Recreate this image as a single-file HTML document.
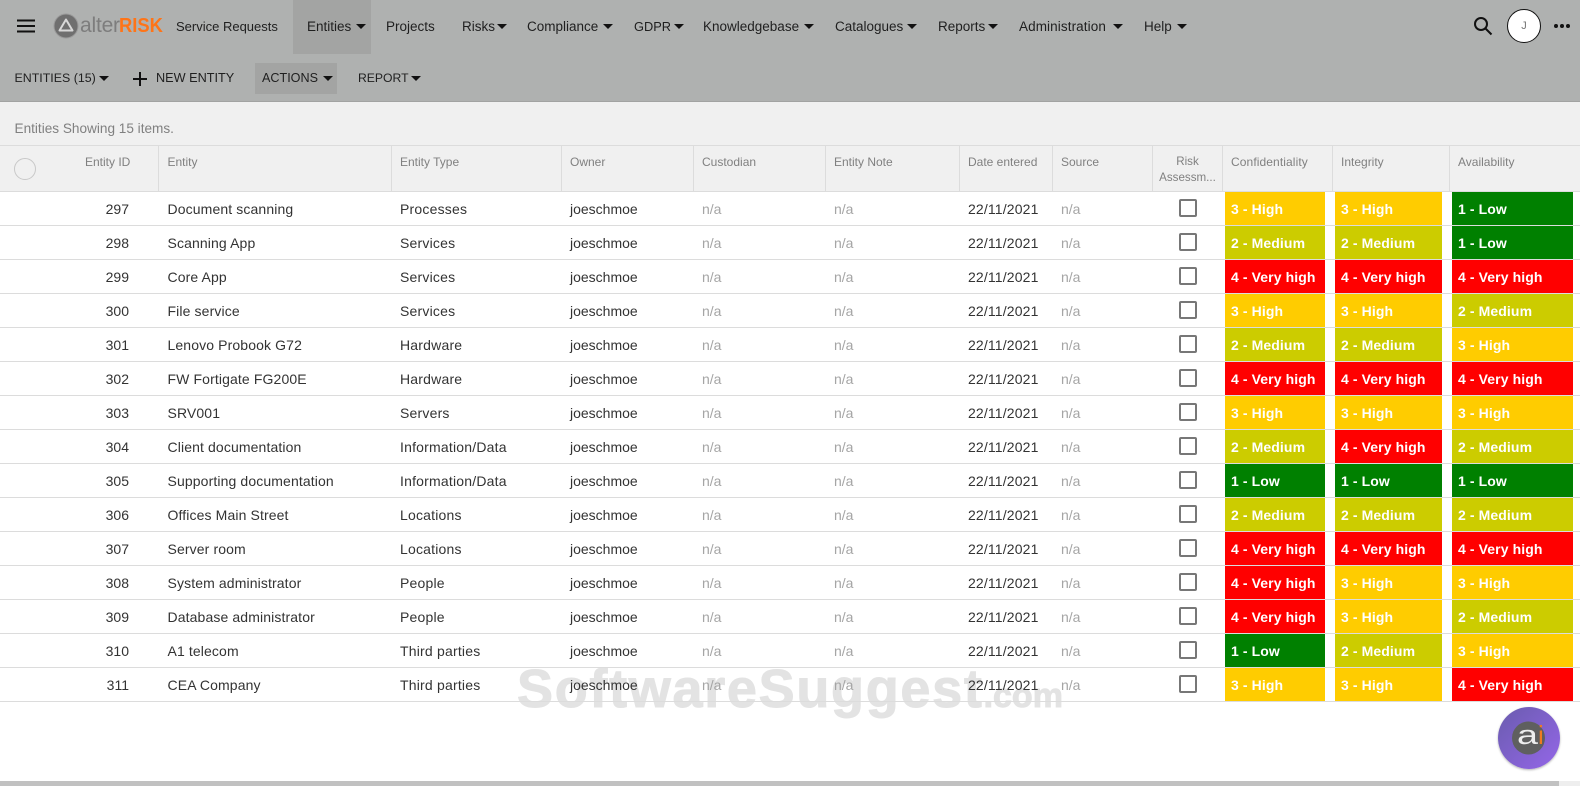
<!DOCTYPE html>
<html><head><meta charset="utf-8"><title>Entities</title>
<style>
html,body{margin:0;padding:0;width:1580px;height:786px;overflow:hidden;background:#fff;font-family:"Liberation Sans",sans-serif;}
.a{position:absolute;white-space:nowrap;}
#top{position:absolute;left:0;top:0;width:1580px;height:101px;background:#afb1b0;border-bottom:1px solid #a2a3a2;}
#sub{position:absolute;left:0;top:102px;width:1580px;height:89px;background:#f0f0f0;}
.n{position:absolute;top:18px;font-size:13.5px;line-height:17px;color:#1f1f1f;white-space:nowrap;}
.s{position:absolute;top:70px;font-size:12.6px;line-height:17px;color:#1f1f1f;white-space:nowrap;}
.ct{position:absolute;width:0;height:0;border-left:5px solid transparent;border-right:5px solid transparent;border-top:5px solid #111;}
.h{position:absolute;top:154px;font-size:12px;line-height:16px;color:#808080;white-space:nowrap;}
.v{position:absolute;top:145px;width:1px;height:46px;background:#dcdcdc;}
.l{position:absolute;left:0;width:1580px;height:1px;background:#dcdcdc;}
.r{position:absolute;left:0;width:1580px;height:33px;font-size:14px;line-height:35px;color:#333;}
.r span{position:absolute;top:0;white-space:nowrap;}
.i{left:79px;width:50px;text-align:right;}
.e{left:167.5px;letter-spacing:.12px;}.t{left:400px;letter-spacing:.2px;}.o{left:570px;}
.c{left:702px;color:#a5a5a5;}.m{left:834px;color:#a5a5a5;}
.d{left:968px;letter-spacing:.15px;}.u{left:1061px;color:#a5a5a5;}
.r b{position:absolute;top:0;height:33px;box-sizing:border-box;padding-left:6px;font-size:14px;color:#fff;white-space:nowrap;letter-spacing:.1px;}
.x{left:1225px;width:100px;}.y{left:1335px;width:107px;}.z{left:1452px;width:121px;}
.H{background:#ffcc00;}.M{background:#cccc00;}.L{background:#008000;}.V{background:#ff0000;}
.k{left:1179px;top:7px!important;width:14px;height:14px;border:2px solid #777;border-radius:2px;background:#fff;}
</style></head><body>
<div id="top"></div>
<div class="a" style="left:293px;top:0;width:78px;height:54px;background:#a3a4a3"></div>
<div class="a" style="left:255px;top:63px;width:82px;height:31px;background:#a3a4a3"></div>

<svg class="a" style="left:16px;top:19px" width="20" height="14"><path d="M1 1.5H19M1 7H19M1 12.5H19" stroke="#111" stroke-width="2"/></svg>
<svg class="a" style="left:53px;top:13px" width="26" height="26"><circle cx="13" cy="13" r="12" fill="#6f6f6f" stroke="#9a9a9a" stroke-width="1"/><path d="M13 6.5L19.5 17.5H6.5Z" fill="none" stroke="#d8d8d8" stroke-width="2" stroke-linejoin="round"/></svg>
<div class="a" style="left:80px;top:12px;font-size:21px;line-height:28px;color:#7d7d7d;letter-spacing:-.2px">alter</div>
<div class="a" style="left:119px;top:12px;font-size:20px;line-height:28px;font-weight:bold;color:#ff7417;transform:scaleX(.92);transform-origin:left center">RISK</div>

<div class="n" style="left:176px;font-size:13px">Service Requests</div>
<div class="n" style="left:307px">Entities</div><div class="ct" style="left:356px;top:24px"></div>
<div class="n" style="left:386px">Projects</div>
<div class="n" style="left:462px">Risks</div><div class="ct" style="left:497px;top:24px"></div>
<div class="n" style="left:527px">Compliance</div><div class="ct" style="left:603px;top:24px"></div>
<div class="n" style="left:634px;font-size:12.8px">GDPR</div><div class="ct" style="left:674px;top:24px"></div>
<div class="n" style="left:703px">Knowledgebase</div><div class="ct" style="left:804px;top:24px"></div>
<div class="n" style="left:835px">Catalogues</div><div class="ct" style="left:907px;top:24px"></div>
<div class="n" style="left:938px">Reports</div><div class="ct" style="left:988px;top:24px"></div>
<div class="n" style="left:1019px;letter-spacing:.1px">Administration</div><div class="ct" style="left:1113px;top:24px"></div>
<div class="n" style="left:1144px">Help</div><div class="ct" style="left:1177px;top:24px"></div>

<svg class="a" style="left:1473px;top:16px" width="20" height="20"><circle cx="8" cy="8" r="6" fill="none" stroke="#111" stroke-width="2"/><path d="M12.5 12.5L18.5 18.5" stroke="#111" stroke-width="2"/></svg>
<div class="a" style="left:1507px;top:9px;width:32px;height:32px;border:1px solid #111;border-radius:50%;background:#fff;text-align:center;font-size:11px;line-height:32px;color:#777">J</div>
<svg class="a" style="left:1553px;top:23px" width="18" height="6"><circle cx="3" cy="3" r="2" fill="#111"/><circle cx="9" cy="3" r="2" fill="#111"/><circle cx="15" cy="3" r="2" fill="#111"/></svg>

<div class="s" style="left:14.5px;font-size:12.4px">ENTITIES (15)</div><div class="ct" style="left:99px;top:76px"></div>
<svg class="a" style="left:132px;top:71px" width="16" height="16"><path d="M8 1V15M1 8H15" stroke="#111" stroke-width="2"/></svg>
<div class="s" style="left:156px;font-size:12.7px">NEW ENTITY</div>
<div class="s" style="left:262px">ACTIONS</div><div class="ct" style="left:323px;top:76px"></div>
<div class="s" style="left:358px;font-size:12.2px">REPORT</div><div class="ct" style="left:411px;top:76px"></div>

<div id="sub"></div>
<div class="a" style="left:14.5px;top:120px;font-size:13.6px;line-height:17px;color:#808080">Entities Showing 15 items.</div>
<div class="l" style="top:145px"></div>
<div class="a" style="left:14px;top:158px;width:20px;height:20px;border:1px solid #c8c8c8;border-radius:50%"></div>
<div class="v" style="left:158px"></div><div class="v" style="left:391px"></div><div class="v" style="left:561px"></div><div class="v" style="left:693px"></div><div class="v" style="left:825px"></div><div class="v" style="left:959px"></div><div class="v" style="left:1052px"></div><div class="v" style="left:1152px"></div><div class="v" style="left:1222px"></div><div class="v" style="left:1332px"></div><div class="v" style="left:1449px"></div>
<div class="h" style="left:85px">Entity ID</div>
<div class="h" style="left:167.5px">Entity</div>
<div class="h" style="left:400px">Entity Type</div>
<div class="h" style="left:570px">Owner</div>
<div class="h" style="left:702px">Custodian</div>
<div class="h" style="left:834px">Entity Note</div>
<div class="h" style="left:968px">Date entered</div>
<div class="h" style="left:1061px">Source</div>
<div class="h" style="left:1153px;width:69px;text-align:center;font-size:11.6px">Risk<br>Assessm...</div>
<div class="h" style="left:1231px;letter-spacing:.1px">Confidentiality</div>
<div class="h" style="left:1341px">Integrity</div>
<div class="h" style="left:1458px">Availability</div>
<div class="l" style="top:191px"></div>

<div class="a" style="left:517px;top:658px;font-size:54px;line-height:62px;font-weight:bold;color:#e3e3e3;letter-spacing:1.7px;-webkit-text-stroke:1px #e3e3e3">SoftwareSuggest<span style="font-size:34px;letter-spacing:0">.com</span></div>

<div class="r" style="top:192px"><span class="i">297</span><span class="e">Document scanning</span><span class="t">Processes</span><span class="o">joeschmoe</span><span class="c">n/a</span><span class="m">n/a</span><span class="d">22/11/2021</span><span class="u">n/a</span><span class="k"></span><b class="x H">3 - High</b><b class="y H">3 - High</b><b class="z L">1 - Low</b></div><div class="l" style="top:225px"></div>
<div class="r" style="top:226px"><span class="i">298</span><span class="e">Scanning App</span><span class="t">Services</span><span class="o">joeschmoe</span><span class="c">n/a</span><span class="m">n/a</span><span class="d">22/11/2021</span><span class="u">n/a</span><span class="k"></span><b class="x M">2 - Medium</b><b class="y M">2 - Medium</b><b class="z L">1 - Low</b></div><div class="l" style="top:259px"></div>
<div class="r" style="top:260px"><span class="i">299</span><span class="e">Core App</span><span class="t">Services</span><span class="o">joeschmoe</span><span class="c">n/a</span><span class="m">n/a</span><span class="d">22/11/2021</span><span class="u">n/a</span><span class="k"></span><b class="x V">4 - Very high</b><b class="y V">4 - Very high</b><b class="z V">4 - Very high</b></div><div class="l" style="top:293px"></div>
<div class="r" style="top:294px"><span class="i">300</span><span class="e">File service</span><span class="t">Services</span><span class="o">joeschmoe</span><span class="c">n/a</span><span class="m">n/a</span><span class="d">22/11/2021</span><span class="u">n/a</span><span class="k"></span><b class="x H">3 - High</b><b class="y H">3 - High</b><b class="z M">2 - Medium</b></div><div class="l" style="top:327px"></div>
<div class="r" style="top:328px"><span class="i">301</span><span class="e">Lenovo Probook G72</span><span class="t">Hardware</span><span class="o">joeschmoe</span><span class="c">n/a</span><span class="m">n/a</span><span class="d">22/11/2021</span><span class="u">n/a</span><span class="k"></span><b class="x M">2 - Medium</b><b class="y M">2 - Medium</b><b class="z H">3 - High</b></div><div class="l" style="top:361px"></div>
<div class="r" style="top:362px"><span class="i">302</span><span class="e">FW Fortigate FG200E</span><span class="t">Hardware</span><span class="o">joeschmoe</span><span class="c">n/a</span><span class="m">n/a</span><span class="d">22/11/2021</span><span class="u">n/a</span><span class="k"></span><b class="x V">4 - Very high</b><b class="y V">4 - Very high</b><b class="z V">4 - Very high</b></div><div class="l" style="top:395px"></div>
<div class="r" style="top:396px"><span class="i">303</span><span class="e">SRV001</span><span class="t">Servers</span><span class="o">joeschmoe</span><span class="c">n/a</span><span class="m">n/a</span><span class="d">22/11/2021</span><span class="u">n/a</span><span class="k"></span><b class="x H">3 - High</b><b class="y H">3 - High</b><b class="z H">3 - High</b></div><div class="l" style="top:429px"></div>
<div class="r" style="top:430px"><span class="i">304</span><span class="e">Client documentation</span><span class="t">Information/Data</span><span class="o">joeschmoe</span><span class="c">n/a</span><span class="m">n/a</span><span class="d">22/11/2021</span><span class="u">n/a</span><span class="k"></span><b class="x M">2 - Medium</b><b class="y V">4 - Very high</b><b class="z M">2 - Medium</b></div><div class="l" style="top:463px"></div>
<div class="r" style="top:464px"><span class="i">305</span><span class="e">Supporting documentation</span><span class="t">Information/Data</span><span class="o">joeschmoe</span><span class="c">n/a</span><span class="m">n/a</span><span class="d">22/11/2021</span><span class="u">n/a</span><span class="k"></span><b class="x L">1 - Low</b><b class="y L">1 - Low</b><b class="z L">1 - Low</b></div><div class="l" style="top:497px"></div>
<div class="r" style="top:498px"><span class="i">306</span><span class="e">Offices Main Street</span><span class="t">Locations</span><span class="o">joeschmoe</span><span class="c">n/a</span><span class="m">n/a</span><span class="d">22/11/2021</span><span class="u">n/a</span><span class="k"></span><b class="x M">2 - Medium</b><b class="y M">2 - Medium</b><b class="z M">2 - Medium</b></div><div class="l" style="top:531px"></div>
<div class="r" style="top:532px"><span class="i">307</span><span class="e">Server room</span><span class="t">Locations</span><span class="o">joeschmoe</span><span class="c">n/a</span><span class="m">n/a</span><span class="d">22/11/2021</span><span class="u">n/a</span><span class="k"></span><b class="x V">4 - Very high</b><b class="y V">4 - Very high</b><b class="z V">4 - Very high</b></div><div class="l" style="top:565px"></div>
<div class="r" style="top:566px"><span class="i">308</span><span class="e">System administrator</span><span class="t">People</span><span class="o">joeschmoe</span><span class="c">n/a</span><span class="m">n/a</span><span class="d">22/11/2021</span><span class="u">n/a</span><span class="k"></span><b class="x V">4 - Very high</b><b class="y H">3 - High</b><b class="z H">3 - High</b></div><div class="l" style="top:599px"></div>
<div class="r" style="top:600px"><span class="i">309</span><span class="e">Database administrator</span><span class="t">People</span><span class="o">joeschmoe</span><span class="c">n/a</span><span class="m">n/a</span><span class="d">22/11/2021</span><span class="u">n/a</span><span class="k"></span><b class="x V">4 - Very high</b><b class="y H">3 - High</b><b class="z M">2 - Medium</b></div><div class="l" style="top:633px"></div>
<div class="r" style="top:634px"><span class="i">310</span><span class="e">A1 telecom</span><span class="t">Third parties</span><span class="o">joeschmoe</span><span class="c">n/a</span><span class="m">n/a</span><span class="d">22/11/2021</span><span class="u">n/a</span><span class="k"></span><b class="x L">1 - Low</b><b class="y M">2 - Medium</b><b class="z H">3 - High</b></div><div class="l" style="top:667px"></div>
<div class="r" style="top:668px"><span class="i">311</span><span class="e">CEA Company</span><span class="t">Third parties</span><span class="o">joeschmoe</span><span class="c">n/a</span><span class="m">n/a</span><span class="d">22/11/2021</span><span class="u">n/a</span><span class="k"></span><b class="x H">3 - High</b><b class="y H">3 - High</b><b class="z V">4 - Very high</b></div><div class="l" style="top:701px"></div>

<div class="a" style="left:1498px;top:707px;width:62px;height:62px;border-radius:50%;background:linear-gradient(135deg,#6a5cae,#9466e8);box-shadow:0 1px 2px rgba(0,0,0,.3)"></div>
<svg class="a" style="left:1498px;top:707px" width="62" height="62"><circle cx="30.5" cy="31" r="16.5" fill="#5f5f5f"/><text x="19" y="37" font-family="Liberation Sans" font-size="27" fill="#eeeeee" textLength="21" lengthAdjust="spacingAndGlyphs">a</text><text x="40" y="37" font-family="Liberation Sans" font-size="26" fill="#f07a20">i</text></svg>

<div class="a" style="left:0;top:781px;width:1559px;height:5px;background:#c1c1c1"></div>
<div class="a" style="left:1559px;top:781px;width:21px;height:5px;background:#eeeeee"></div>
</body></html>
